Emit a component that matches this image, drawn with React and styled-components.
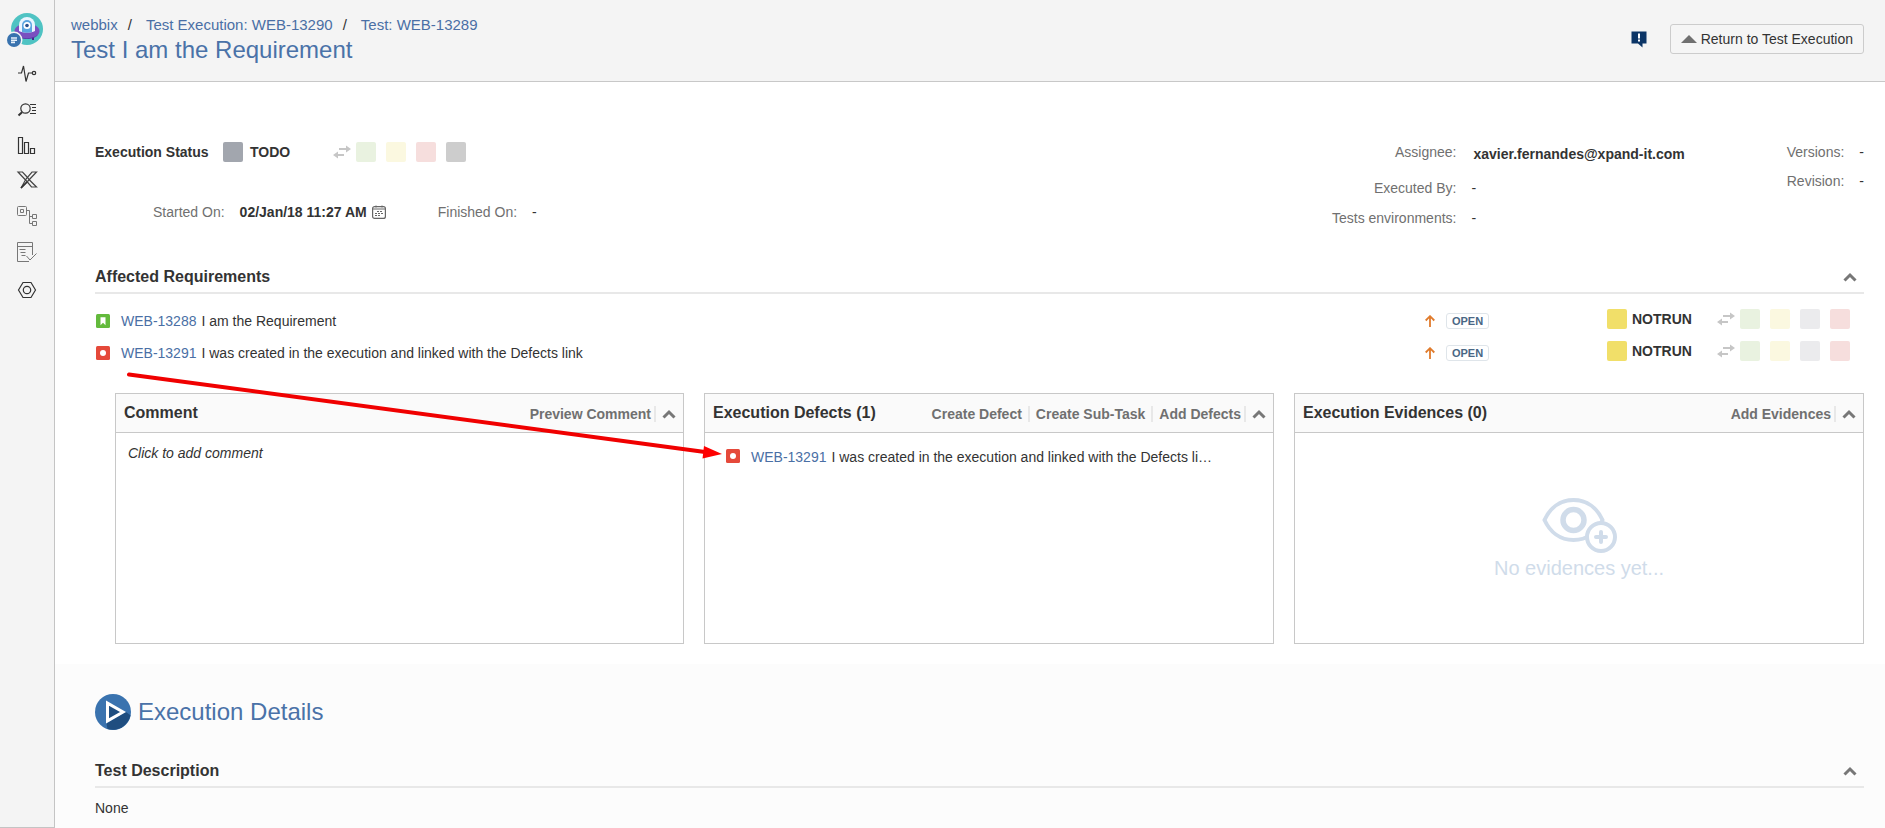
import React from 'react';
import styled, { createGlobalStyle } from 'styled-components';

const GlobalStyle = createGlobalStyle`
    * {
        box-sizing: border-box;
    }
    body {
        margin: 0;
        background: #fff;
        color: #333;
        font-family: "Liberation Sans", Arial, sans-serif;
        font-size: 14px;
        line-height: 20px;
    }
    button {
        font: inherit;
        color: inherit;
        border: 0;
        padding: 0;
        background: none;
        cursor: pointer;
    }
    a {
        color: #4a6fa5;
        text-decoration: none;
    }
    svg {
        display: block;
    }
`;

const Page = styled.div`
    display: flex;
    min-height: 100vh;
    position: relative;
`;

const Sidebar = styled.nav`
    flex: none;
    width: 55px;
    display: flex;
    flex-direction: column;
    align-items: center;
    background: #f4f4f4;
    border-right: 1px solid #c4c4c4;
    border-bottom: 1px solid #c4c4c4;
`;

const Logo = styled.a`
    width: 100%;
    height: 56px;
`;

const SideLink = styled.a`
    svg {
        fill: none;
        stroke: ${props => props.$light ? '#777' : '#333'};
        stroke-width: ${props => props.$light ? 1 : 1.2};
    }
`;

const Main = styled.main`
    flex: 1;
    min-width: 0;
    display: flex;
    flex-direction: column;
`;

const Header = styled.header`
    display: flex;
    justify-content: space-between;
    padding: 15px 21px 16px 16px;
    background: #f4f4f4;
    border-bottom: 1px solid #c8c8c8;
`;

const Breadcrumbs = styled.div`
    display: flex;
    gap: 10px;
    font-size: 15px;
    span {
        margin-right: 4px;
    }
`;

const Title = styled.h1`
    margin: 0;
    font-size: 24px;
    line-height: 30px;
    font-weight: normal;
    color: #4a72a8;
`;

const HeaderActions = styled.div`
    display: flex;
    align-items: center;
    align-self: flex-start;
    gap: 23px;
    padding-top: 9px;
`;

const ReturnButton = styled.button`
    display: flex;
    align-items: center;
    gap: 4px;
    height: 30px;
    padding: 0 10px;
    border: 1px solid #ccc;
    border-radius: 3px;
    background: #f5f5f5;
`;

const Info = styled.section`
    display: flex;
    justify-content: space-between;
    padding: 60px 21px 0 40px;
`;

const StatusLine = styled.div`
    display: flex;
    align-items: center;
    height: 20px;
`;

const StatusName = styled.strong`
    width: ${props => props.$width}px;
    margin-left: ${props => props.$gap}px;
`;

const StatusLabel = styled.strong`
    width: 128px;
`;

const Swatch = styled.span`
    display: block;
    flex: none;
    width: 20px;
    height: 20px;
    border-radius: 2px;
    background: ${props => props.$color};
`;

const Swatches = styled.div`
    display: flex;
    gap: 10px;
    margin-left: 5px;
`;

const Dates = styled.div`
    display: flex;
    align-items: center;
    margin-top: 40px;
    padding-left: 58px;
`;

const Label = styled.span`
    color: #707070;
    text-align: right;
`;

const DateValue = styled.strong`
    display: flex;
    align-items: center;
    gap: 5px;
    margin: 0 52px 0 15px;
`;

const Dash = styled.span`
    margin-left: 15px;
`;

const People = styled.div`
    display: flex;
    gap: 102px;
`;

const Fields = styled.div`
    display: grid;
    grid-template-columns: auto auto;
    grid-template-rows: ${props => props.$rows};
    column-gap: 15px;
    align-content: start;
`;

const Assignee = styled.strong`
    padding: 2px 0 0 2px;
`;

const Section = styled.section`
    padding: 0 21px 0 40px;
`;

const SectionHead = styled.div`
    display: flex;
    align-items: center;
    justify-content: space-between;
    height: 34px;
    padding: 2px 7px 0 0;
    border-bottom: 2px solid #e8e8e8;
`;

const Heading = styled.h2`
    margin: 0;
    font-size: 16px;
    line-height: 20px;
    font-weight: bold;
`;

const Requirements = styled.table`
    width: 100%;
    margin-top: 9px;
    border-collapse: collapse;
    table-layout: fixed;
`;

const Cell = styled.td`
    height: 32px;
    width: ${props => props.$width ? `${props.$width}px` : 'auto'};
    padding: ${props => props.$low ? '4px 0 0' : '0'};
`;

const Issue = styled.div`
    display: flex;
    align-items: center;
    white-space: nowrap;
    svg {
        flex: none;
        margin: 0 11px 0 1px;
    }
    a {
        margin-right: 5px;
    }
`;

const Lozenge = styled.span`
    display: block;
    width: 43px;
    height: 16px;
    border: 1px solid #dfe5ea;
    border-radius: 3px;
    color: #4a6785;
    font-size: 11px;
    line-height: 15px;
    font-weight: bold;
    text-align: center;
`;

const Panels = styled.div`
    display: grid;
    grid-template-columns: 569fr 570fr 570fr;
    gap: 20px;
    padding: 26px 0 20px 20px;
`;

const Panel = styled.section`
    min-width: 0;
    height: 251px;
    border: 1px solid #c8c8c8;
`;

const PanelHead = styled.div`
    display: flex;
    align-items: center;
    justify-content: space-between;
    height: 39px;
    padding: 0 7px 0 8px;
    background: #fafafa;
    border-bottom: 1px solid #c8c8c8;
`;

const PanelActions = styled.div`
    display: flex;
    align-items: center;
    padding-top: 2px;
`;

const PanelAction = styled.button`
    padding: ${props => props.$last ? '0 3px 0 6px' : '0 6px'};
    margin-right: ${props => props.$last ? '6px' : '0'};
    border-right: 2px solid #e8e8e8;
    line-height: 16px;
    font-weight: bold;
    color: #707070;
`;

const CommentButton = styled.button`
    margin: 10px 12px;
    font-style: italic;
`;

const DefectRow = styled.div`
    padding: 14px 20px;
    svg {
        margin-bottom: 3px;
    }
`;

const Empty = styled.div`
    display: flex;
    flex-direction: column;
    align-items: center;
    padding-top: 65px;
    gap: 2px;
    color: #d0dcea;
    font-size: 20px;
    line-height: 24px;
`;

const Details = styled.section`
    flex: 1;
    padding: 30px 21px 10px 40px;
    background: #fcfcfc;
`;

const DetailsTitle = styled.div`
    display: flex;
    align-items: center;
    gap: 7px;
    margin-bottom: 24px;
`;

const Description = styled.p`
    margin: 10px 0 0;
`;

const Annotation = styled.svg`
    position: absolute;
    left: 125px;
    top: 368px;
    pointer-events: none;
`;

const GREEN = '#e9f2e0';
const YELLOW = '#fbf8e0';
const RED = '#f6dedd';

const LogoIcon = () => (
    <svg width="54" height="56" viewBox="0 0 54 56">
        <circle cx="27" cy="29" r="16" fill="#4fc3c3"/>
        <path d="M20 37v3M33 37v3" stroke="#45248f" strokeWidth="2"/>
        <ellipse cx="27" cy="31" rx="12.500" ry="7.500" fill="#7a4fc0"/>
        <path d="M16 34.500c5 5 17 5 22 0-2 3.500-7 4.500-11 4.500s-9-1-11-4.500z" fill="#5a32a3"/>
        <path d="M19 31v-6a8 8 0 0 1 16 0v6c-4 2-12 2-16 0z" fill="#e9f5ff"/>
        <path d="M22 32v-7a5 5 0 0 1 10 0v7c-3 1-7 1-10 0z" fill="#5aa5e0"/>
        <circle cx="27" cy="25.500" r="3.500" fill="#fff"/>
        <circle cx="27" cy="25.500" r="1.800" fill="#28508c"/>
        <circle cx="14" cy="40" r="8.500" fill="#f4f4f4"/>
        <circle cx="14" cy="40" r="7" fill="#3872ae"/>
        <path d="M11 38h6M11 40.200h6M11 42.400h4" stroke="#e6f0fa" strokeWidth="1.600"/>
    </svg>
);

const sideIcons = [
    {
        name: 'Activity',
        shape: <><path d="M9 17h3.500l2-7 2.500 15.500 2.500-8.500h3.500"/><circle cx="25" cy="17" r="1.700"/></>,
    },
    {
        name: 'Issues',
        shape: <><circle cx="16.500" cy="16.500" r="4.700"/><path d="M13 20.300l-3.500 3.200" strokeWidth="2"/><path d="M21 12.500h6M23 15.500h4M23 18.500h4M21 21.500h6"/></>,
    },
    {
        name: 'Reports',
        shape: <path d="M9.500 9.500h4v16h-4zM15.500 14.500h4v11h-4zM21.500 20.500h4v5h-4z"/>,
    },
    {
        name: 'Xray',
        shape: (
            <g stroke="#444">
                <path d="M9 8h4.500l5 5.500 2 2.500 7 7h-5l-5-6z"/>
                <path d="M27.500 8H23l-6 7-5 9 6-6z"/>
                <path d="M12 24l6-6" stroke="#333" strokeWidth="1.600"/>
            </g>
        ),
    },
    {
        name: 'Components',
        light: true,
        shape: <><rect x="8.500" y="6.500" width="9" height="9" rx="1"/><path d="M11.500 9.500h3v3h-3zM17.500 10.500h3v13h3M20.500 16.500h3M23.500 14.500h4v4h-4zM23.500 21.500h4v4h-4z"/></>,
    },
    {
        name: 'Test plans',
        light: true,
        shape: <path d="M23.500 19V6.500h-15v19H20M8.500 10.500h15M10.500 13.500h6M11.500 16.500h5M12.500 19.500h4M17.500 20l3.500 4 6.500-6.500"/>,
    },
    {
        name: 'Settings',
        shape: <><path d="M9.500 18L14 10.500h8l4.500 7.500-4.500 7.500h-8z"/><circle cx="18" cy="18" r="3.700"/></>,
    },
];

const FeedbackIcon = () => (
    <svg width="16" height="17" viewBox="0 0 16 17">
        <path d="M0.500 0.500h15v12H11.500v4L7 12.500H0.500z" fill="#0b3566"/>
        <path d="M8 2.500v5M8 8.500v2" stroke="#fff" strokeWidth="2"/>
    </svg>
);

const TriangleIcon = () => (
    <svg width="16" height="8" viewBox="0 0 16 8"><path d="M0 8l8-8 8 8z" fill="#707070"/></svg>
);

const Chevron = () => (
    <svg width="14" height="10" viewBox="0 0 14 10">
        <path d="M1.500 8.500L7 3l5.500 5.500" fill="none" stroke="#777" strokeWidth="3"/>
    </svg>
);

const SwapIcon = () => (
    <svg width="18" height="14" viewBox="0 0 18 14">
        <path d="M6 4h8M4 10h7" stroke="#c6c6c6" strokeWidth="2"/>
        <path d="M13 0.500l5 3.500-5 3.500zM5 6.500L0 10l5 3.500z" fill="#c6c6c6"/>
    </svg>
);

const CalendarIcon = () => (
    <svg width="14" height="14" viewBox="0 0 14 14" fill="none" stroke="#666">
        <rect x="0.600" y="1.600" width="12.800" height="11.800" rx="2" strokeWidth="1.200"/>
        <path d="M1 4h12M4 0.500v2M10 0.500v2"/>
        <path d="M5 6.500h6M3 8.500h8M3 10.500h6" strokeDasharray="2 1"/>
    </svg>
);

const StoryIcon = () => (
    <svg width="14" height="14" viewBox="0 0 14 14">
        <rect width="14" height="14" rx="1.500" fill="#63ba3c"/>
        <path d="M4.500 3.200h5v8L7 8.700l-2.500 2.500z" fill="#fff"/>
    </svg>
);

const BugIcon = () => (
    <svg width="14" height="14" viewBox="0 0 14 14">
        <rect width="14" height="14" rx="1.500" fill="#e5493a"/>
        <circle cx="7" cy="7" r="3" fill="#fff"/>
    </svg>
);

const PriorityIcon = () => (
    <svg width="10" height="12" viewBox="0 0 10 12" fill="none" stroke="#e07b2c" strokeWidth="1.800">
        <path d="M5 12V1.500M0.700 5.500L5 1.200l4.300 4.300"/>
    </svg>
);

const EyeIcon = () => (
    <svg width="78" height="56" viewBox="-2 0 78 56" fill="none" stroke="#d0dcea">
        <path d="M2.500 22C8 10 18 2 31.500 2S55 10 60.500 22C55 34 45 42 31.500 42S8 34 2.500 22z" strokeWidth="4"/>
        <circle cx="31.500" cy="22" r="10.500" strokeWidth="5.500"/>
        <circle cx="59" cy="39" r="14" fill="#fff" strokeWidth="4"/>
        <path d="M59 34v10M54 39h10" strokeWidth="4" strokeLinecap="round"/>
    </svg>
);

const PlayIcon = () => (
    <svg width="36" height="36" viewBox="0 0 36 36">
        <circle cx="18" cy="18" r="18" fill="#3a73af"/>
        <path d="M11.500 29.500L30.500 17.800l5 3.400A18 18 0 0 1 12.500 35z" fill="#1f4e80"/>
        <path d="M12.500 9.200v17.600L28 18z" fill="#1f4e80" stroke="#fff" strokeWidth="3"/>
    </svg>
);

const StatusPicker = ({ colors }) => (
    <>
        <SwapIcon/>
        <Swatches>
            {colors.map(({ name, color }) => (
                <Swatch key={name} as="button" aria-label={name} $color={color}/>
            ))}
        </Swatches>
    </>
);

const executionColors = [
    { name: 'PASS', color: GREEN },
    { name: 'EXECUTING', color: YELLOW },
    { name: 'FAIL', color: RED },
    { name: 'ABORTED', color: '#cdcdcd' },
];

const requirementColors = [
    { name: 'OK', color: GREEN },
    { name: 'NOTRUN', color: YELLOW },
    { name: 'UNKNOWN', color: '#ebebed' },
    { name: 'NOK', color: RED },
];

const requirements = [
    { id: 'WEB-13288', icon: StoryIcon, summary: 'I am the Requirement' },
    { id: 'WEB-13291', icon: BugIcon, summary: 'I was created in the execution and linked with the Defects link' },
];

// summaries in the defects panel are cut to 61 characters
const defects = requirements.slice(1).map(issue => ({
    ...issue,
    summary: issue.summary.length > 61 ? `${issue.summary.slice(0, 61)}…` : issue.summary,
}));

const IssueLine = ({ issue }) => (
    <Issue>
        <issue.icon/>
        <a href="#issue">{issue.id}</a>
        <span>{issue.summary}</span>
    </Issue>
);

const Collapsible = ({ title }) => (
    <SectionHead>
        <Heading>{title}</Heading>
        <button aria-label="Collapse"><Chevron/></button>
    </SectionHead>
);

const PanelBox = ({ title, actions, children }) => (
    <Panel>
        <PanelHead>
            <Heading>{title}</Heading>
            <PanelActions>
                {actions.map((action, i) => (
                    <PanelAction key={action} $last={i === actions.length - 1}>{action}</PanelAction>
                ))}
                <button aria-label="Collapse"><Chevron/></button>
            </PanelActions>
        </PanelHead>
        {children}
    </Panel>
);

const RequirementsSection = styled(Section)`
    padding-top: 22px;
`;

const App = () => (
    <Page>
        <GlobalStyle/>
        <Sidebar>
            <Logo href="#project" aria-label="webbix"><LogoIcon/></Logo>
            {sideIcons.map(({ name, light, shape }) => (
                <SideLink key={name} href="#nav" aria-label={name} $light={light}>
                    <svg width="36" height="36" viewBox="0 0 36 36">{shape}</svg>
                </SideLink>
            ))}
        </Sidebar>
        <Main>
            <Header>
                <div>
                    <Breadcrumbs>
                        <a href="#project">webbix</a>
                        <span>/</span>
                        <a href="#execution">Test Execution: WEB-13290</a>
                        <span>/</span>
                        <a href="#test">Test: WEB-13289</a>
                    </Breadcrumbs>
                    <Title>Test I am the Requirement</Title>
                </div>
                <HeaderActions>
                    <button aria-label="Feedback"><FeedbackIcon/></button>
                    <ReturnButton><TriangleIcon/>Return to Test Execution</ReturnButton>
                </HeaderActions>
            </Header>
            <Info>
                <div>
                    <StatusLine>
                        <StatusLabel>Execution Status</StatusLabel>
                        <Swatch $color="#a2a6ae"/>
                        <StatusName $width={83} $gap={7}>TODO</StatusName>
                        <StatusPicker colors={executionColors}/>
                    </StatusLine>
                    <Dates>
                        <Label>Started On:</Label>
                        <DateValue>02/Jan/18 11:27 AM <CalendarIcon/></DateValue>
                        <Label>Finished On:</Label>
                        <Dash>-</Dash>
                    </Dates>
                </div>
                <People>
                    <Fields $rows="36px 30px 30px">
                        <Label>Assignee:</Label>
                        <Assignee>xavier.fernandes@xpand-it.com</Assignee>
                        <Label>Executed By:</Label>
                        <span>-</span>
                        <Label>Tests environments:</Label>
                        <span>-</span>
                    </Fields>
                    <Fields $rows="29px 29px">
                        <Label>Versions:</Label>
                        <span>-</span>
                        <Label>Revision:</Label>
                        <span>-</span>
                    </Fields>
                </People>
            </Info>
            <RequirementsSection>
                <Collapsible title="Affected Requirements"/>
                <Requirements>
                    <tbody>
                        {requirements.map(issue => (
                            <tr key={issue.id}>
                                <Cell $low><IssueLine issue={issue}/></Cell>
                                <Cell $low $width={21}><PriorityIcon/></Cell>
                                <Cell $low $width={161}><Lozenge>OPEN</Lozenge></Cell>
                                <Cell $width={257}>
                                    <StatusLine>
                                        <Swatch $color="#f1df69"/>
                                        <StatusName $width={85} $gap={5}>NOTRUN</StatusName>
                                        <StatusPicker colors={requirementColors}/>
                                    </StatusLine>
                                </Cell>
                            </tr>
                        ))}
                    </tbody>
                </Requirements>
                <Panels>
                    <PanelBox title="Comment" actions={['Preview Comment']}>
                        <CommentButton>Click to add comment</CommentButton>
                    </PanelBox>
                    <PanelBox title="Execution Defects (1)" actions={['Create Defect', 'Create Sub-Task', 'Add Defects']}>
                        {defects.map(issue => (
                            <DefectRow key={issue.id}><IssueLine issue={issue}/></DefectRow>
                        ))}
                    </PanelBox>
                    <PanelBox title="Execution Evidences (0)" actions={['Add Evidences']}>
                        <Empty>
                            <EyeIcon/>
                            No evidences yet...
                        </Empty>
                    </PanelBox>
                </Panels>
            </RequirementsSection>
            <Details>
                <DetailsTitle>
                    <PlayIcon/>
                    <Title as="h2">Execution Details</Title>
                </DetailsTitle>
                <Collapsible title="Test Description"/>
                <Description>None</Description>
            </Details>
        </Main>
        <Annotation width="600" height="96" viewBox="0 0 600 96">
            <path d="M4 6.500L580 84" stroke="#f00000" strokeWidth="4" strokeLinecap="round"/>
            <path d="M579 78l18 8-19.500 4.500z" fill="#fe0000"/>
        </Annotation>
    </Page>
);

export default App;
